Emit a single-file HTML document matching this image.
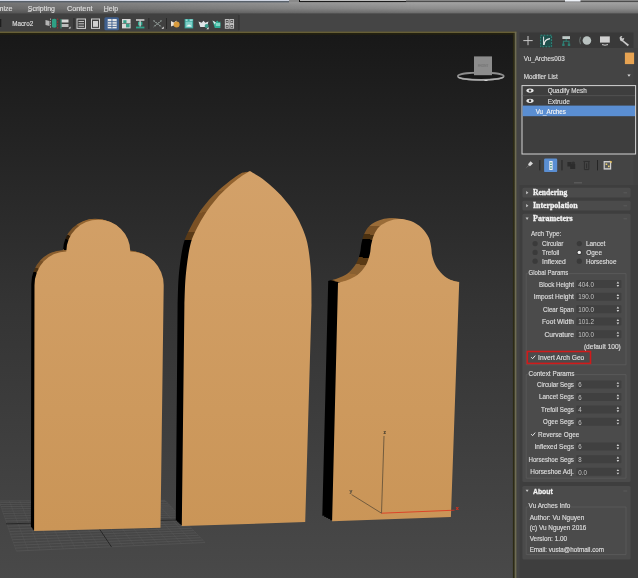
<!DOCTYPE html><html><head><meta charset="utf-8"><title>3ds Max - Vu_Arches</title>
<style>html,body{margin:0;padding:0;background:#444;overflow:hidden}svg{display:block}text{white-space:pre}</style></head><body>
<svg width="638" height="578" viewBox="0 0 638 578" style="will-change:transform;filter:grayscale(0)">
<defs>
<linearGradient id="vp" x1="0" y1="0" x2="0" y2="1"><stop offset="0" stop-color="#181818"/><stop offset="0.5" stop-color="#343434"/><stop offset="1" stop-color="#494949"/></linearGradient>
<linearGradient id="menu" x1="0" y1="0" x2="0" y2="1"><stop offset="0" stop-color="#787878"/><stop offset="0.5" stop-color="#6a6a6a"/><stop offset="0.85" stop-color="#545454"/><stop offset="1" stop-color="#464646"/></linearGradient>
<linearGradient id="menu2" x1="0" y1="0" x2="0" y2="1"><stop offset="0" stop-color="#a4a4a4"/><stop offset="0.5" stop-color="#8c8c8c"/><stop offset="0.85" stop-color="#6a6a6a"/><stop offset="1" stop-color="#464646"/></linearGradient>
<linearGradient id="mh" x1="0" y1="0" x2="1" y2="0"><stop offset="0" stop-color="#fff" stop-opacity="0"/><stop offset="0.65" stop-color="#fff" stop-opacity="1"/><stop offset="1" stop-color="#fff" stop-opacity="1"/></linearGradient>
<mask id="mm" maskUnits="userSpaceOnUse" x="0" y="0" width="638" height="20"><rect x="0" y="0" width="638" height="20" fill="url(#mh)"/></mask>
<linearGradient id="face" gradientUnits="userSpaceOnUse" x1="0" y1="170" x2="0" y2="530"><stop offset="0" stop-color="#d3a169"/><stop offset="1" stop-color="#ca9557"/></linearGradient>
</defs>
<rect x="0.00" y="0.00" width="638.00" height="578.00" fill="#444444"/>
<rect x="0.00" y="2.00" width="638.00" height="13.20" fill="url(#menu)"/>
<rect x="0.00" y="2.00" width="638.00" height="13.20" fill="url(#menu2)" mask="url(#mm)"/>
<rect x="0.00" y="0.00" width="289.00" height="1.20" fill="#cfd5e2"/>
<rect x="0.00" y="1.20" width="289.00" height="1.20" fill="#56606c"/>
<rect x="289.00" y="0.00" width="10.00" height="2.00" fill="#8a8a8a"/>
<rect x="299.00" y="0.00" width="1.20" height="2.00" fill="#111"/>
<rect x="300.00" y="0.00" width="106.00" height="1.00" fill="#bcbcbc"/>
<rect x="300.00" y="1.00" width="106.00" height="1.10" fill="#1c1c1c"/>
<rect x="406.00" y="0.00" width="232.00" height="1.00" fill="#858585"/>
<rect x="406.00" y="1.00" width="232.00" height="1.10" fill="#4c4c4c"/>
<rect x="565.00" y="0.00" width="15.50" height="1.60" fill="#eef2f8"/>
<rect x="0.00" y="13.50" width="239.00" height="18.00" fill="#404040"/>
<rect x="239.00" y="13.50" width="399.00" height="18.00" fill="#454545"/>
<rect x="0.00" y="19.00" width="1.30" height="8.00" fill="#1e1e1e"/>
<text x="12.6" y="10.78" font-family='"Liberation Sans", sans-serif' font-size="7.2" font-weight="normal" fill="#dcdcdc" text-anchor="end" stroke="#dcdcdc" stroke-width="0.18">mize</text>
<text x="27.8" y="10.78" font-family='"Liberation Sans", sans-serif' font-size="7.2" font-weight="normal" fill="#dcdcdc" text-anchor="start" textLength="27.2" lengthAdjust="spacingAndGlyphs" stroke="#dcdcdc" stroke-width="0.18">Scripting</text>
<rect x="27.80" y="11.30" width="3.60" height="0.70" fill="#dcdcdc"/>
<text x="66.9" y="10.78" font-family='"Liberation Sans", sans-serif' font-size="7.2" font-weight="normal" fill="#dcdcdc" text-anchor="start" textLength="25.6" lengthAdjust="spacingAndGlyphs" stroke="#dcdcdc" stroke-width="0.18">Content</text>
<text x="103.8" y="10.78" font-family='"Liberation Sans", sans-serif' font-size="7.2" font-weight="normal" fill="#dcdcdc" text-anchor="start" textLength="14.3" lengthAdjust="spacingAndGlyphs" stroke="#dcdcdc" stroke-width="0.18">Help</text>
<rect x="103.80" y="11.30" width="4.00" height="0.70" fill="#dcdcdc"/>
<text x="12.2" y="26.01" font-family='"Liberation Sans", sans-serif' font-size="7" font-weight="normal" fill="#dcdcdc" text-anchor="start" textLength="21.0" lengthAdjust="spacingAndGlyphs" stroke="#dcdcdc" stroke-width="0.18">Macro2</text>
<path d="M45.5,20 l4,1 v5 l-4,-1z" fill="#b4b4b4"/>
<path d="M50.5,18.5 v10" stroke="#cfcfcf" stroke-width="0.7" stroke-dasharray="1.4 1.2"/>
<path d="M52,19.5 q2.4,-1.6 4.4,0 v7.5 q-2,1.6 -4.4,0z" fill="#2f9f84"/>
<path d="M57.7,18.5 v10.5" stroke="#b03030" stroke-width="0.8" stroke-dasharray="1.6 1.2"/>
<rect x="61.50" y="19.50" width="7.00" height="3.00" fill="#d8d8d8"/>
<rect x="61.50" y="24.00" width="7.00" height="3.00" fill="#bdbdbd"/>
<path d="M68.5,28.5 h2 v-2z" fill="#eee"/>
<rect x="60.60" y="19.00" width="0.80" height="9.50" fill="#35a88a"/>
<rect x="73.50" y="18.00" width="0.90" height="11.00" fill="#262626"/>
<rect x="77.00" y="19.00" width="8.50" height="9.40" fill="none" stroke="#d0d0d0" stroke-width="1"/>
<rect x="78.50" y="21.00" width="5.50" height="0.90" fill="#d0d0d0"/>
<rect x="78.50" y="23.40" width="5.50" height="0.90" fill="#d0d0d0"/>
<rect x="78.50" y="25.80" width="5.50" height="0.90" fill="#d0d0d0"/>
<rect x="91.50" y="19.00" width="8.00" height="9.40" fill="none" stroke="#d0d0d0" stroke-width="1"/>
<rect x="93.00" y="21.00" width="5.00" height="0.90" fill="#d0d0d0"/>
<rect x="93.00" y="23.40" width="5.00" height="0.90" fill="#d0d0d0"/>
<rect x="93.00" y="25.80" width="5.00" height="0.90" fill="#d0d0d0"/>
<rect x="93.00" y="21.00" width="5.00" height="5.50" fill="#cfcfcf"/>
<rect x="104.40" y="17.20" width="14.60" height="13.00" fill="#3f5f8e" rx="1.5"/>
<rect x="107.70" y="19.00" width="9.00" height="9.40" fill="#e8e8e8"/>
<rect x="107.70" y="21.30" width="9.00" height="0.80" fill="#3f5f8e"/>
<rect x="107.70" y="23.70" width="9.00" height="0.80" fill="#3f5f8e"/>
<rect x="107.70" y="26.10" width="9.00" height="0.80" fill="#3f5f8e"/>
<rect x="111.50" y="19.00" width="0.90" height="9.40" fill="#3f5f8e"/>
<rect x="122.00" y="19.00" width="8.60" height="9.40" fill="#d8d8d8"/>
<rect x="123.30" y="20.20" width="3.20" height="3.20" fill="#38a08a"/>
<rect x="126.00" y="23.80" width="3.60" height="3.60" fill="#38a08a"/>
<rect x="122.00" y="23.20" width="8.60" height="0.70" fill="#666"/>
<rect x="136.00" y="19.30" width="8.40" height="1.40" fill="#e0e0e0"/>
<rect x="136.00" y="26.60" width="8.40" height="1.80" fill="#2fa58c"/>
<rect x="138.00" y="21.80" width="4.40" height="3.60" fill="#2fa58c"/>
<rect x="139.50" y="20.50" width="1.20" height="6.00" fill="#ddd"/>
<rect x="148.40" y="18.00" width="0.90" height="11.00" fill="#262626"/>
<path d="M153.5,20.5 l8,6.5 M161.5,20.5 l-8,6.5" stroke="#9aa6a2" stroke-width="1.1" stroke-dasharray="1.6 0.9"/>
<path d="M161.5,28.8 h2.2 v-2.2z" fill="#eee"/>
<rect x="166.00" y="18.00" width="0.90" height="11.00" fill="#262626"/>
<path d="M171,21 l3,1.5 l2.5,-2 v6 l-3,-1 l-2.5,1z" fill="#e6e0d8"/>
<circle cx="176.6" cy="24.6" r="3" fill="#d79a3c"/>
<rect x="184.60" y="19.00" width="8.60" height="9.40" fill="#3aa39a"/>
<rect x="185.60" y="21.60" width="6.60" height="5.80" fill="#7fd0c8"/>
<rect x="185.60" y="19.60" width="2.00" height="1.00" fill="#dff"/>
<rect x="189.60" y="19.60" width="3.00" height="1.00" fill="#dff"/>
<path d="M186.5,26.5 q2.6,-4 5,0z" fill="#e8f4f2"/>
<path d="M198.5,21.5 l3.2,1.2 l1.8,-2 l1.8,2 l3.2,-1.2 l-1.8,5.4 h-6.4z" fill="#dfe4e6"/>
<circle cx="206.6" cy="26" r="2" fill="#3a9c8c"/>
<path d="M206.4,29.2 h2.2 v-2.2z" fill="#eee"/>
<path d="M212.6,20.8 l3,1.4 l1.6,-1.8 l1.6,1.8 l1.6,-0.8 v6.6 h-5.6z" fill="#2fae96"/>
<path d="M212.4,20.4 l3.4,1.8 l-1,2.4z" fill="#e8e8e8"/>
<rect x="215.80" y="23.00" width="4.40" height="3.00" fill="#7fd6c4"/>
<rect x="225.30" y="19.60" width="3.60" height="3.80" fill="none" stroke="#cfcfcf" stroke-width="0.9"/>
<rect x="226.40" y="20.90" width="1.40" height="1.40" fill="#cfcfcf"/>
<rect x="230.00" y="19.60" width="3.60" height="3.80" fill="none" stroke="#cfcfcf" stroke-width="0.9"/>
<rect x="231.10" y="20.90" width="1.40" height="1.40" fill="#cfcfcf"/>
<rect x="225.30" y="24.40" width="3.60" height="3.80" fill="none" stroke="#cfcfcf" stroke-width="0.9"/>
<rect x="226.40" y="25.70" width="1.40" height="1.40" fill="#cfcfcf"/>
<rect x="230.00" y="24.40" width="3.60" height="3.80" fill="none" stroke="#cfcfcf" stroke-width="0.9"/>
<rect x="231.10" y="25.70" width="1.40" height="1.40" fill="#cfcfcf"/>
<rect x="238.60" y="15.00" width="0.80" height="15.50" fill="#2e2e2e"/>
<rect x="0.00" y="32.00" width="516.00" height="546.00" fill="url(#vp)"/>
<rect x="0.00" y="31.60" width="516.40" height="1.50" fill="#675f36"/>
<rect x="0.00" y="33.10" width="514.70" height="1.60" fill="#242210"/>
<rect x="512.90" y="33.10" width="1.80" height="545.00" fill="#2c2a14"/>
<rect x="514.70" y="31.80" width="1.70" height="546.40" fill="#6e6c52"/>
<path d="M-1.0,501.0L16.4,551.0M9.4,501.0L28.2,550.5M19.8,500.9L40.0,549.9M30.1,500.9L51.8,549.4M40.5,500.8L63.5,548.9M50.9,500.8L75.3,548.3M61.2,500.7L87.1,547.8M71.6,500.7L98.9,547.3M82.0,500.6L110.7,546.8M92.4,500.6L122.5,546.2M102.8,500.6L134.3,545.7M113.1,500.5L146.1,545.2M123.5,500.5L157.8,544.6M133.9,500.4L169.6,544.1M144.2,500.4L181.4,543.6M154.6,500.3L193.2,543.0M165.0,500.3L205.0,542.5" stroke="#585858" stroke-width="0.5" fill="none" opacity="0.7"/>
<path d="M-1.0,501.0L165.0,500.3M-0.4,502.6L166.3,501.6M0.2,504.5L167.8,503.3M1.0,506.6L169.5,505.1M1.7,508.9L171.3,506.9M2.5,511.2L173.1,508.9M3.4,513.5L175.0,510.9M4.2,516.0L177.0,512.9M5.1,518.4L178.9,515.0M5.9,521.0L181.0,517.1M6.8,523.5L183.0,519.3M7.7,526.1L185.1,521.5M8.7,528.8L187.2,523.8M9.6,531.5L189.4,526.0M10.5,534.2L191.5,528.3M11.5,536.9L193.7,530.6M12.5,539.7L195.9,532.9M13.4,542.5L198.2,535.3M14.4,545.3L200.4,537.7M15.4,548.1L202.7,540.1M16.4,551.0L205.0,542.5" stroke="#5c5c5c" stroke-width="0.6" fill="none" opacity="0.85"/>
<path d="M6,523.8 L190,519.6 M80.5,500.5 L111.5,547" stroke="#1e1e1e" stroke-width="0.8" fill="none"/>
<defs><linearGradient id="s1" gradientUnits="userSpaceOnUse" x1="0" y1="215" x2="0" y2="300"><stop offset="0.0000" stop-color="#93642f"/><stop offset="0.1294" stop-color="#93642f"/><stop offset="0.1294" stop-color="#7a5226"/><stop offset="0.2471" stop-color="#7a5226"/><stop offset="0.2471" stop-color="#2a1a08"/><stop offset="0.2941" stop-color="#2a1a08"/><stop offset="0.2941" stop-color="#000"/><stop offset="0.4176" stop-color="#000"/><stop offset="0.4176" stop-color="#8a5e2e"/><stop offset="0.5529" stop-color="#8a5e2e"/><stop offset="0.5529" stop-color="#7a5226"/><stop offset="0.6353" stop-color="#7a5226"/><stop offset="0.6353" stop-color="#4a3012"/><stop offset="0.6824" stop-color="#4a3012"/><stop offset="0.6824" stop-color="#000"/><stop offset="1.0000" stop-color="#000"/></linearGradient></defs>
<defs><path id="arch1" d="M34.1,531 L34.5,285.2 A31.9,33.8 0 0 1 66.3,251.4 A32,31.7 0 0 1 130.3,251.4 A33.4,33.8 0 0 1 163.7,285.2 L160.5,527.8 Z"/></defs>
<use href="#arch1" fill="url(#s1)" transform="matrix(1 0 0.00000 0.98996 -3.200 1.330)"/>
<use href="#arch1" fill="url(#s1)" transform="matrix(1 0 0.00000 0.99197 -2.560 1.064)"/>
<use href="#arch1" fill="url(#s1)" transform="matrix(1 0 0.00000 0.99398 -1.920 0.798)"/>
<use href="#arch1" fill="url(#s1)" transform="matrix(1 0 0.00000 0.99598 -1.280 0.532)"/>
<use href="#arch1" fill="url(#s1)" transform="matrix(1 0 0.00000 0.99799 -0.640 0.266)"/>
<use href="#arch1" fill="url(#face)"/>
<defs><linearGradient id="s2" gradientUnits="userSpaceOnUse" x1="0" y1="170" x2="0" y2="250"><stop offset="0.0000" stop-color="#93632f"/><stop offset="0.2500" stop-color="#93632f"/><stop offset="0.2500" stop-color="#855a2a"/><stop offset="0.5250" stop-color="#855a2a"/><stop offset="0.5250" stop-color="#7a5024"/><stop offset="0.7750" stop-color="#7a5024"/><stop offset="0.7750" stop-color="#5a3a16"/><stop offset="0.8750" stop-color="#5a3a16"/><stop offset="0.8750" stop-color="#000"/><stop offset="1.0000" stop-color="#000"/></linearGradient></defs>
<defs><path id="arch2" d="M181.8,526.1 L184.4,305 C184.6,301.1 184.8,288.5 185.3,281.3 C185.8,274.1 186.4,268.4 187.3,261.9 C188.2,255.4 189.3,248.2 190.9,242.5 C192.5,236.8 194.6,232.8 197.0,228.0 C199.4,223.2 202.2,218.2 205.4,213.4 C208.6,208.6 212.5,203.3 216.3,198.9 C220.1,194.5 224.4,190.4 228.4,186.8 C232.4,183.2 236.9,179.7 240.5,177.1 C244.1,174.5 248.2,172.1 249.8,171.1 C251.5,172.1 256.2,174.5 259.9,177.1 C263.6,179.7 268.0,183.2 272.0,186.8 C276.0,190.4 280.3,194.5 284.1,198.9 C287.9,203.3 292.0,208.6 295.0,213.4 C298.0,218.2 300.3,223.2 302.3,228.0 C304.3,232.8 305.9,236.8 307.2,242.5 C308.5,248.2 309.4,255.4 310.1,261.9 C310.8,268.4 311.1,274.1 311.3,281.3 C311.5,288.5 311.5,301.1 311.5,305.0 L305.2,522.1 Z"/></defs>
<use href="#arch2" fill="url(#s2)" transform="matrix(1 0 0.00366 0.98030 -7.930 4.870)"/>
<use href="#arch2" fill="url(#s2)" transform="matrix(1 0 0.00293 0.98424 -6.344 3.896)"/>
<use href="#arch2" fill="url(#s2)" transform="matrix(1 0 0.00220 0.98818 -4.758 2.922)"/>
<use href="#arch2" fill="url(#s2)" transform="matrix(1 0 0.00146 0.99212 -3.172 1.948)"/>
<use href="#arch2" fill="url(#s2)" transform="matrix(1 0 0.00073 0.99606 -1.586 0.974)"/>
<use href="#arch2" fill="url(#face)"/>
<defs><linearGradient id="s3" gradientUnits="userSpaceOnUse" x1="0" y1="215" x2="0" y2="300"><stop offset="0.0000" stop-color="#9a6c38"/><stop offset="0.1365" stop-color="#9a6c38"/><stop offset="0.1365" stop-color="#7a5226"/><stop offset="0.2353" stop-color="#7a5226"/><stop offset="0.2353" stop-color="#4a3010"/><stop offset="0.2918" stop-color="#4a3010"/><stop offset="0.2918" stop-color="#000"/><stop offset="0.5106" stop-color="#000"/><stop offset="0.5106" stop-color="#5a3a14"/><stop offset="0.5929" stop-color="#5a3a14"/><stop offset="0.5929" stop-color="#8a6030"/><stop offset="0.7059" stop-color="#8a6030"/><stop offset="0.7059" stop-color="#9a6a34"/><stop offset="0.7906" stop-color="#9a6a34"/><stop offset="0.7906" stop-color="#000"/><stop offset="1.0000" stop-color="#000"/></linearGradient></defs>
<defs><path id="arch3" d="M332.1,521.3 L338,282.7 C339.6,282.2 344.5,281.2 347.7,279.9 C350.9,278.6 354.4,277.4 357.4,275.0 C360.4,272.6 363.6,268.8 365.7,265.4 C367.8,261.9 368.9,257.8 369.8,254.3 C370.7,250.8 370.5,247.8 371.2,244.6 C371.9,241.4 372.6,237.9 374.0,234.9 C375.4,231.9 377.0,228.9 379.5,226.6 C382.0,224.3 385.9,222.4 389.2,221.1 C392.4,219.8 395.4,219.0 399.0,219.0 C402.6,219.0 407.0,219.6 410.8,221.1 C414.6,222.6 418.8,225.2 421.8,228.0 C424.8,230.8 427.2,234.5 428.8,237.7 C430.4,240.9 430.6,244.4 431.2,247.4 C431.8,250.4 431.4,252.7 432.2,255.7 C432.9,258.7 434.0,262.3 435.7,265.4 C437.4,268.5 440.1,272.0 442.6,274.4 C445.1,276.8 448.1,278.6 450.9,279.9 C453.7,281.2 457.8,281.6 459.2,282.0 L450.9,517 Z"/></defs>
<use href="#arch3" fill="url(#s3)" transform="matrix(1 0 0.00000 0.98410 -9.800 2.780)"/>
<use href="#arch3" fill="url(#s3)" transform="matrix(1 0 0.00000 0.98728 -7.840 2.224)"/>
<use href="#arch3" fill="url(#s3)" transform="matrix(1 0 0.00000 0.99046 -5.880 1.668)"/>
<use href="#arch3" fill="url(#s3)" transform="matrix(1 0 0.00000 0.99364 -3.920 1.112)"/>
<use href="#arch3" fill="url(#s3)" transform="matrix(1 0 0.00000 0.99682 -1.960 0.556)"/>
<use href="#arch3" fill="url(#face)"/>
<path d="M381.5,513.2 L384,436" stroke="#4c4232" stroke-width="0.7" fill="none"/>
<path d="M381.5,513.2 L351.6,494.6" stroke="#4c4232" stroke-width="0.7" fill="none"/>
<path d="M381.5,513.2 L454.5,510.2" stroke="#e0301c" stroke-width="0.8" fill="none"/>
<text x="383.4" y="434.39" font-family='"Liberation Sans", sans-serif' font-size="5" font-weight="bold" fill="#4a4030" text-anchor="start" stroke="#4a4030" stroke-width="0.18">z</text>
<text x="349.4" y="493.39" font-family='"Liberation Sans", sans-serif' font-size="5" font-weight="bold" fill="#5a5040" text-anchor="start" stroke="#5a5040" stroke-width="0.18">y</text>
<text x="455.8" y="509.97" font-family='"Liberation Sans", sans-serif' font-size="5.5" font-weight="bold" fill="#d83020" text-anchor="start" stroke="#d83020" stroke-width="0.18">x</text>
<ellipse cx="480.8" cy="76.2" rx="23" ry="3.6" fill="#161616" stroke="#8e8e8e" stroke-width="1.6"/>
<path d="M458.2,77 A23,3.6 0 0 0 503.4,77" fill="none" stroke="#b0b0b0" stroke-width="1.5"/>
<rect x="474.00" y="56.40" width="18.00" height="18.80" fill="#8c8c8c"/>
<text x="483.0" y="67.29" font-family='"Liberation Sans", sans-serif' font-size="3.6" font-weight="normal" fill="#777" text-anchor="middle" textLength="10.5" lengthAdjust="spacingAndGlyphs" stroke="#777" stroke-width="0.18">FRONT</text>
<rect x="484.50" y="80.00" width="3.00" height="0.90" fill="#ddd"/>
<rect x="519.50" y="32.50" width="114.00" height="15.50" fill="#393939"/>
<rect x="519.50" y="185.00" width="118.50" height="393.00" fill="#3e3e3e"/>
<rect x="633.60" y="48.00" width="4.40" height="137.00" fill="#414141"/>
<path d="M523.3,40.6 h9.4 M528,36 v9.2" stroke="#cfcfcf" stroke-width="0.95" fill="none"/>
<rect x="540.60" y="35.20" width="11.00" height="11.60" fill="#1f4f4b" stroke="#2f8a7e" stroke-width="1" stroke-dasharray="1.8 1.2"/>
<path d="M544,45 q0.2,-5.6 6,-6.4" stroke="#e8e8e8" stroke-width="1.3" fill="none"/>
<path d="M543.6,36.6 v8.4" stroke="#e8e8e8" stroke-width="1" fill="none"/>
<rect x="562.40" y="36.20" width="7.60" height="2.80" fill="#bfcac8"/>
<path d="M566.2,39 v2 M563.4,45.8 v-4.6 h5.6 v4.6" stroke="#2f7f74" stroke-width="1.1" fill="none"/>
<rect x="562.20" y="43.60" width="2.40" height="2.40" fill="#2f7f74"/>
<rect x="567.80" y="43.60" width="2.40" height="2.40" fill="#2f7f74"/>
<circle cx="586.9" cy="40.5" r="4.3" fill="#b9c2c0"/>
<path d="M580.5,36.8 q-1.8,3.8 0,7.4" stroke="#6e7876" stroke-width="0.9" fill="none"/>
<rect x="600.00" y="36.40" width="9.80" height="6.20" fill="#d0d0d0"/>
<path d="M602,44.6 q3,1.2 6,0" stroke="#cfcfcf" stroke-width="1" fill="none"/>
<path d="M619.6,37.6 q0.6,-2 2.8,-1.6 l-1,1.6 l1.2,1 l1.6,-0.8 q0.2,1.6 -1,2.4 l5.8,4.6 l-1.2,1.4 l-5.8,-5 q-2.2,0.4 -2.4,-3.6z" fill="#c8c8c8"/>
<text x="523.7" y="61.01" font-family='"Liberation Sans", sans-serif' font-size="7" font-weight="normal" fill="#dcdcdc" text-anchor="start" textLength="41.1" lengthAdjust="spacingAndGlyphs" stroke="#dcdcdc" stroke-width="0.18">Vu_Arches003</text>
<rect x="624.90" y="52.60" width="9.20" height="11.50" fill="#e7a352"/>
<text x="523.7" y="78.51" font-family='"Liberation Sans", sans-serif' font-size="7" font-weight="normal" fill="#dcdcdc" text-anchor="start" textLength="34.1" lengthAdjust="spacingAndGlyphs" stroke="#dcdcdc" stroke-width="0.18">Modifier List</text>
<path d="M627.4,74.6 h3.2 l-1.6,2.2z" fill="#dedede"/>
<rect x="522.00" y="85.60" width="113.60" height="68.40" fill="#3e3e3e" stroke="#d4d4d4" stroke-width="1"/>
<rect x="522.60" y="95.40" width="112.40" height="0.70" fill="#5a5a5a"/>
<rect x="522.60" y="105.60" width="112.40" height="10.60" fill="#5a8ed2"/>
<ellipse cx="530" cy="90.6" rx="3.6" ry="2.1" fill="#e6e6e6"/><circle cx="530" cy="90.6" r="1.2" fill="#333"/>
<ellipse cx="530" cy="100.8" rx="3.6" ry="2.1" fill="#e6e6e6"/><circle cx="530" cy="100.8" r="1.2" fill="#333"/>
<text x="547.7" y="93.31" font-family='"Liberation Sans", sans-serif' font-size="7" font-weight="normal" fill="#dcdcdc" text-anchor="start" textLength="39.0" lengthAdjust="spacingAndGlyphs" stroke="#dcdcdc" stroke-width="0.18">Quadify Mesh</text>
<text x="547.7" y="103.51" font-family='"Liberation Sans", sans-serif' font-size="7" font-weight="normal" fill="#dcdcdc" text-anchor="start" textLength="22.1" lengthAdjust="spacingAndGlyphs" stroke="#dcdcdc" stroke-width="0.18">Extrude</text>
<text x="535.7" y="113.51" font-family='"Liberation Sans", sans-serif' font-size="7" font-weight="normal" fill="#f4f4f4" text-anchor="start" textLength="30.1" lengthAdjust="spacingAndGlyphs" stroke="#f4f4f4" stroke-width="0.18">Vu_Arches</text>
<path d="M525.4,168.8 l3.4,-3.6 l-0.8,-1 l2.6,-3 l2.4,2.4 l-3,2.6 l-1,-0.8z" fill="#d8d8d8"/>
<rect x="539.40" y="160.00" width="0.90" height="10.40" fill="#222"/>
<rect x="544.10" y="158.50" width="13.10" height="13.60" fill="#5a8ed2" rx="1.2"/>
<rect x="549.30" y="161.00" width="3.30" height="9.00" fill="#f0f0f0"/>
<rect x="550.20" y="162.50" width="1.50" height="1.20" fill="#2a8a7a"/>
<rect x="550.20" y="165.00" width="1.50" height="1.20" fill="#2a8a7a"/>
<rect x="550.20" y="167.50" width="1.50" height="1.20" fill="#2a8a7a"/>
<rect x="561.50" y="160.00" width="0.90" height="10.40" fill="#222"/>
<path d="M567.4,162 h4.2 v2 h3.6 v5 h-5 v-2.4 h-2.8z" fill="#2c2c2c"/><circle cx="573.4" cy="163" r="1.6" fill="#303030"/>
<path d="M583.4,161.4 h6.4 M584.4,162 v7.6 h4.4 v-7.6 M586.6,163.4 v5" stroke="#2e2e2e" stroke-width="1" fill="none"/>
<rect x="597.00" y="160.00" width="0.90" height="10.40" fill="#222"/>
<rect x="603.60" y="161.00" width="7.60" height="8.60" fill="#cfcfcf"/>
<rect x="604.80" y="162.40" width="5.20" height="5.80" fill="#5a5a5a"/>
<rect x="605.60" y="163.40" width="1.60" height="1.60" fill="#e8d070"/>
<rect x="608.00" y="165.60" width="1.60" height="1.60" fill="#e8d070"/>
<path d="M609.6,160.4 l2.6,1.4 l-1.2,1.6z" fill="#e8c050"/>
<rect x="574.00" y="182.40" width="8.00" height="0.90" fill="#666" stroke-dasharray="1 1"/>
<rect x="522.40" y="187.80" width="108.20" height="9.80" fill="#4b4b4b" rx="1.5"/>
<path d="M526.2,191.10000000000002 v3.2 l2.2,-1.6z" fill="#c8c8c8"/>
<text x="533.0" y="195.35" font-family='"Liberation Serif", serif' font-size="8.6" font-weight="bold" fill="#f2f2f2" text-anchor="start" textLength="34.2" lengthAdjust="spacingAndGlyphs" stroke="#f2f2f2" stroke-width="0.3">Rendering</text>
<rect x="623.50" y="192.40" width="3.60" height="0.80" fill="#5e5e5e"/>
<rect x="522.40" y="200.80" width="108.20" height="9.80" fill="#4b4b4b" rx="1.5"/>
<path d="M526.2,204.10000000000002 v3.2 l2.2,-1.6z" fill="#c8c8c8"/>
<text x="533.0" y="208.35" font-family='"Liberation Serif", serif' font-size="8.6" font-weight="bold" fill="#f2f2f2" text-anchor="start" textLength="44.5" lengthAdjust="spacingAndGlyphs" stroke="#f2f2f2" stroke-width="0.3">Interpolation</text>
<rect x="623.50" y="205.40" width="3.60" height="0.80" fill="#5e5e5e"/>
<rect x="522.40" y="213.80" width="108.20" height="268.20" fill="#4b4b4b" rx="1.5"/>
<path d="M525.6,217.50000000000003 h3 l-1.5,2.4z" fill="#c8c8c8"/>
<text x="533.0" y="221.35" font-family='"Liberation Serif", serif' font-size="8.6" font-weight="bold" fill="#f2f2f2" text-anchor="start" textLength="39.7" lengthAdjust="spacingAndGlyphs" stroke="#f2f2f2" stroke-width="0.3">Parameters</text>
<rect x="623.50" y="218.40" width="3.60" height="0.80" fill="#5e5e5e"/>
<rect x="522.40" y="486.00" width="108.20" height="73.50" fill="#4b4b4b" rx="1.5"/>
<path d="M525.6,489.7 h3 l-1.5,2.4z" fill="#c8c8c8"/>
<text x="533.0" y="493.55" font-family='"Liberation Sans", sans-serif' font-size="7.6" font-weight="bold" fill="#f2f2f2" text-anchor="start" textLength="19.7" lengthAdjust="spacingAndGlyphs" stroke="#f2f2f2" stroke-width="0.3">About</text>
<rect x="623.50" y="490.60" width="3.60" height="0.80" fill="#5e5e5e"/>
<text x="531.1" y="236.11" font-family='"Liberation Sans", sans-serif' font-size="7" font-weight="normal" fill="#dcdcdc" text-anchor="start" textLength="30.1" lengthAdjust="spacingAndGlyphs" stroke="#dcdcdc" stroke-width="0.18">Arch Type:</text>
<circle cx="535.1" cy="243.6" r="2.6" fill="#3a3a3a"/>
<text x="542.1" y="246.21" font-family='"Liberation Sans", sans-serif' font-size="7" font-weight="normal" fill="#dcdcdc" text-anchor="start" textLength="21.1" lengthAdjust="spacingAndGlyphs" stroke="#dcdcdc" stroke-width="0.18">Circular</text>
<circle cx="579.3" cy="243.6" r="2.6" fill="#3a3a3a"/>
<text x="585.9" y="246.21" font-family='"Liberation Sans", sans-serif' font-size="7" font-weight="normal" fill="#dcdcdc" text-anchor="start" textLength="19.5" lengthAdjust="spacingAndGlyphs" stroke="#dcdcdc" stroke-width="0.18">Lancet</text>
<circle cx="535.1" cy="252.4" r="2.6" fill="#3a3a3a"/>
<text x="542.1" y="255.01" font-family='"Liberation Sans", sans-serif' font-size="7" font-weight="normal" fill="#dcdcdc" text-anchor="start" textLength="17.1" lengthAdjust="spacingAndGlyphs" stroke="#dcdcdc" stroke-width="0.18">Trefoil</text>
<circle cx="579.3" cy="252.4" r="2.6" fill="#3a3a3a"/>
<circle cx="579.3" cy="252.4" r="1.7" fill="#f2f2f2"/>
<text x="586.3" y="255.01" font-family='"Liberation Sans", sans-serif' font-size="7" font-weight="normal" fill="#dcdcdc" text-anchor="start" textLength="15.7" lengthAdjust="spacingAndGlyphs" stroke="#dcdcdc" stroke-width="0.18">Ogee</text>
<circle cx="535.1" cy="261.2" r="2.6" fill="#3a3a3a"/>
<text x="542.1" y="263.81" font-family='"Liberation Sans", sans-serif' font-size="7" font-weight="normal" fill="#dcdcdc" text-anchor="start" textLength="23.7" lengthAdjust="spacingAndGlyphs" stroke="#dcdcdc" stroke-width="0.18">Inflexed</text>
<circle cx="579.3" cy="261.2" r="2.6" fill="#3a3a3a"/>
<text x="585.9" y="263.81" font-family='"Liberation Sans", sans-serif' font-size="7" font-weight="normal" fill="#dcdcdc" text-anchor="start" textLength="30.5" lengthAdjust="spacingAndGlyphs" stroke="#dcdcdc" stroke-width="0.18">Horseshoe</text>
<path d="M568.9000000000001,273.6 H626 V364.8 H526.2 V273.6 H527.8000000000001" stroke="#5c5c5c" stroke-width="0.8" fill="none"/>
<text x="528.6" y="274.91" font-family='"Liberation Sans", sans-serif' font-size="7" font-weight="normal" fill="#dcdcdc" text-anchor="start" textLength="39.7" lengthAdjust="spacingAndGlyphs" stroke="#dcdcdc" stroke-width="0.18">Global Params</text>
<text x="573.9" y="286.61" font-family='"Liberation Sans", sans-serif' font-size="7" font-weight="normal" fill="#dcdcdc" text-anchor="end" textLength="34.8" lengthAdjust="spacingAndGlyphs" stroke="#dcdcdc" stroke-width="0.18">Block Height</text>
<rect x="576.30" y="280.10" width="45.10" height="8.00" fill="#404040" rx="0.8"/>
<text x="578.3" y="286.81" font-family='"Liberation Sans", sans-serif' font-size="7" font-weight="normal" fill="#c4c4c4" text-anchor="start" textLength="15.7" lengthAdjust="spacingAndGlyphs">404.0</text>
<path d="M616.6,283.40000000000003 h2.6 l-1.3,-1.9z M616.6,285.0 h2.6 l-1.3,1.9z" fill="#d8d8d8"/>
<text x="573.9" y="299.21" font-family='"Liberation Sans", sans-serif' font-size="7" font-weight="normal" fill="#dcdcdc" text-anchor="end" textLength="40.2" lengthAdjust="spacingAndGlyphs" stroke="#dcdcdc" stroke-width="0.18">Impost Height</text>
<rect x="576.30" y="292.70" width="45.10" height="8.00" fill="#404040" rx="0.8"/>
<text x="578.3" y="299.41" font-family='"Liberation Sans", sans-serif' font-size="7" font-weight="normal" fill="#c4c4c4" text-anchor="start" textLength="15.7" lengthAdjust="spacingAndGlyphs">190.0</text>
<path d="M616.6,296.0 h2.6 l-1.3,-1.9z M616.6,297.59999999999997 h2.6 l-1.3,1.9z" fill="#d8d8d8"/>
<text x="573.9" y="311.71" font-family='"Liberation Sans", sans-serif' font-size="7" font-weight="normal" fill="#dcdcdc" text-anchor="end" textLength="30.8" lengthAdjust="spacingAndGlyphs" stroke="#dcdcdc" stroke-width="0.18">Clear Span</text>
<rect x="576.30" y="305.20" width="45.10" height="8.00" fill="#404040" rx="0.8"/>
<text x="578.3" y="311.91" font-family='"Liberation Sans", sans-serif' font-size="7" font-weight="normal" fill="#c4c4c4" text-anchor="start" textLength="15.7" lengthAdjust="spacingAndGlyphs">100.0</text>
<path d="M616.6,308.5 h2.6 l-1.3,-1.9z M616.6,310.09999999999997 h2.6 l-1.3,1.9z" fill="#d8d8d8"/>
<text x="573.9" y="324.11" font-family='"Liberation Sans", sans-serif' font-size="7" font-weight="normal" fill="#dcdcdc" text-anchor="end" textLength="31.8" lengthAdjust="spacingAndGlyphs" stroke="#dcdcdc" stroke-width="0.18">Foot Width</text>
<rect x="576.30" y="317.60" width="45.10" height="8.00" fill="#404040" rx="0.8"/>
<text x="578.3" y="324.31" font-family='"Liberation Sans", sans-serif' font-size="7" font-weight="normal" fill="#c4c4c4" text-anchor="start" textLength="15.7" lengthAdjust="spacingAndGlyphs">101.2</text>
<path d="M616.6,320.90000000000003 h2.6 l-1.3,-1.9z M616.6,322.5 h2.6 l-1.3,1.9z" fill="#d8d8d8"/>
<text x="573.9" y="336.81" font-family='"Liberation Sans", sans-serif' font-size="7" font-weight="normal" fill="#dcdcdc" text-anchor="end" textLength="29.4" lengthAdjust="spacingAndGlyphs" stroke="#dcdcdc" stroke-width="0.18">Curvature</text>
<rect x="576.30" y="330.30" width="45.10" height="8.00" fill="#404040" rx="0.8"/>
<text x="578.3" y="337.01" font-family='"Liberation Sans", sans-serif' font-size="7" font-weight="normal" fill="#c4c4c4" text-anchor="start" textLength="15.7" lengthAdjust="spacingAndGlyphs">100.0</text>
<path d="M616.6,333.6 h2.6 l-1.3,-1.9z M616.6,335.2 h2.6 l-1.3,1.9z" fill="#d8d8d8"/>
<text x="620.8" y="349.01" font-family='"Liberation Sans", sans-serif' font-size="7" font-weight="normal" fill="#dcdcdc" text-anchor="end" textLength="36.9" lengthAdjust="spacingAndGlyphs" stroke="#dcdcdc" stroke-width="0.18">(default 100)</text>
<path d="M531.2,357.2 l1.4,1.5 l2.6,-3.1" stroke="#e8e8e8" stroke-width="1" fill="none"/>
<text x="538.1" y="360.11" font-family='"Liberation Sans", sans-serif' font-size="7" font-weight="normal" fill="#dcdcdc" text-anchor="start" textLength="46.2" lengthAdjust="spacingAndGlyphs" stroke="#dcdcdc" stroke-width="0.18">Invert Arch Geo</text>
<rect x="527.30" y="351.50" width="63.20" height="11.90" fill="none" stroke="#d01a1a" stroke-width="1.6"/>
<path d="M575.0,374.6 H626 V478.2 H526.2 V374.6 H527.8000000000001" stroke="#5c5c5c" stroke-width="0.8" fill="none"/>
<text x="528.6" y="375.91" font-family='"Liberation Sans", sans-serif' font-size="7" font-weight="normal" fill="#dcdcdc" text-anchor="start" textLength="45.8" lengthAdjust="spacingAndGlyphs" stroke="#dcdcdc" stroke-width="0.18">Context Params</text>
<text x="573.9" y="387.01" font-family='"Liberation Sans", sans-serif' font-size="7" font-weight="normal" fill="#dcdcdc" text-anchor="end" textLength="36.8" lengthAdjust="spacingAndGlyphs" stroke="#dcdcdc" stroke-width="0.18">Circular Segs</text>
<rect x="576.30" y="380.50" width="45.10" height="8.00" fill="#404040" rx="0.8"/>
<text x="578.3" y="387.21" font-family='"Liberation Sans", sans-serif' font-size="7" font-weight="normal" fill="#c4c4c4" text-anchor="start" textLength="3.4" lengthAdjust="spacingAndGlyphs">6</text>
<path d="M616.6,383.8 h2.6 l-1.3,-1.9z M616.6,385.4 h2.6 l-1.3,1.9z" fill="#d8d8d8"/>
<text x="573.9" y="399.41" font-family='"Liberation Sans", sans-serif' font-size="7" font-weight="normal" fill="#dcdcdc" text-anchor="end" textLength="34.8" lengthAdjust="spacingAndGlyphs" stroke="#dcdcdc" stroke-width="0.18">Lancet Segs</text>
<rect x="576.30" y="392.90" width="45.10" height="8.00" fill="#404040" rx="0.8"/>
<text x="578.3" y="399.61" font-family='"Liberation Sans", sans-serif' font-size="7" font-weight="normal" fill="#c4c4c4" text-anchor="start" textLength="3.4" lengthAdjust="spacingAndGlyphs">6</text>
<path d="M616.6,396.2 h2.6 l-1.3,-1.9z M616.6,397.79999999999995 h2.6 l-1.3,1.9z" fill="#d8d8d8"/>
<text x="573.9" y="411.91" font-family='"Liberation Sans", sans-serif' font-size="7" font-weight="normal" fill="#dcdcdc" text-anchor="end" textLength="32.8" lengthAdjust="spacingAndGlyphs" stroke="#dcdcdc" stroke-width="0.18">Trefoil Segs</text>
<rect x="576.30" y="405.40" width="45.10" height="8.00" fill="#404040" rx="0.8"/>
<text x="578.3" y="412.11" font-family='"Liberation Sans", sans-serif' font-size="7" font-weight="normal" fill="#c4c4c4" text-anchor="start" textLength="3.4" lengthAdjust="spacingAndGlyphs">4</text>
<path d="M616.6,408.7 h2.6 l-1.3,-1.9z M616.6,410.29999999999995 h2.6 l-1.3,1.9z" fill="#d8d8d8"/>
<text x="573.9" y="424.31" font-family='"Liberation Sans", sans-serif' font-size="7" font-weight="normal" fill="#dcdcdc" text-anchor="end" textLength="30.8" lengthAdjust="spacingAndGlyphs" stroke="#dcdcdc" stroke-width="0.18">Ogee Segs</text>
<rect x="576.30" y="417.80" width="45.10" height="8.00" fill="#404040" rx="0.8"/>
<text x="578.3" y="424.51" font-family='"Liberation Sans", sans-serif' font-size="7" font-weight="normal" fill="#c4c4c4" text-anchor="start" textLength="3.4" lengthAdjust="spacingAndGlyphs">6</text>
<path d="M616.6,421.1 h2.6 l-1.3,-1.9z M616.6,422.7 h2.6 l-1.3,1.9z" fill="#d8d8d8"/>
<path d="M531.2,434.2 l1.4,1.5 l2.6,-3.1" stroke="#e8e8e8" stroke-width="1" fill="none"/>
<text x="538.1" y="437.11" font-family='"Liberation Sans", sans-serif' font-size="7" font-weight="normal" fill="#dcdcdc" text-anchor="start" textLength="41.2" lengthAdjust="spacingAndGlyphs" stroke="#dcdcdc" stroke-width="0.18">Reverse Ogee</text>
<text x="573.9" y="449.11" font-family='"Liberation Sans", sans-serif' font-size="7" font-weight="normal" fill="#dcdcdc" text-anchor="end" textLength="39.4" lengthAdjust="spacingAndGlyphs" stroke="#dcdcdc" stroke-width="0.18">Inflexed Segs</text>
<rect x="576.30" y="442.60" width="45.10" height="8.00" fill="#404040" rx="0.8"/>
<text x="578.3" y="449.31" font-family='"Liberation Sans", sans-serif' font-size="7" font-weight="normal" fill="#c4c4c4" text-anchor="start" textLength="3.4" lengthAdjust="spacingAndGlyphs">6</text>
<path d="M616.6,445.90000000000003 h2.6 l-1.3,-1.9z M616.6,447.5 h2.6 l-1.3,1.9z" fill="#d8d8d8"/>
<text x="573.9" y="461.71" font-family='"Liberation Sans", sans-serif' font-size="7" font-weight="normal" fill="#dcdcdc" text-anchor="end" textLength="45.4" lengthAdjust="spacingAndGlyphs" stroke="#dcdcdc" stroke-width="0.18">Horseshoe Segs</text>
<rect x="576.30" y="455.20" width="45.10" height="8.00" fill="#404040" rx="0.8"/>
<text x="578.3" y="461.91" font-family='"Liberation Sans", sans-serif' font-size="7" font-weight="normal" fill="#c4c4c4" text-anchor="start" textLength="3.4" lengthAdjust="spacingAndGlyphs">8</text>
<path d="M616.6,458.5 h2.6 l-1.3,-1.9z M616.6,460.09999999999997 h2.6 l-1.3,1.9z" fill="#d8d8d8"/>
<text x="573.9" y="474.31" font-family='"Liberation Sans", sans-serif' font-size="7" font-weight="normal" fill="#dcdcdc" text-anchor="end" textLength="43.6" lengthAdjust="spacingAndGlyphs" stroke="#dcdcdc" stroke-width="0.18">Horseshoe Adj.</text>
<rect x="576.30" y="467.80" width="45.10" height="8.00" fill="#404040" rx="0.8"/>
<text x="578.3" y="474.51" font-family='"Liberation Sans", sans-serif' font-size="7" font-weight="normal" fill="#c4c4c4" text-anchor="start" textLength="8.6" lengthAdjust="spacingAndGlyphs">0.0</text>
<path d="M616.6,471.1 h2.6 l-1.3,-1.9z M616.6,472.7 h2.6 l-1.3,1.9z" fill="#d8d8d8"/>
<path d="M570.9000000000001,507 H626 V554.6 H526.2 V507 H527.8000000000001" stroke="#5c5c5c" stroke-width="0.8" fill="none"/>
<text x="528.6" y="508.31" font-family='"Liberation Sans", sans-serif' font-size="7" font-weight="normal" fill="#dcdcdc" text-anchor="start" textLength="41.7" lengthAdjust="spacingAndGlyphs" stroke="#dcdcdc" stroke-width="0.18">Vu Arches Info</text>
<text x="529.7" y="519.71" font-family='"Liberation Sans", sans-serif' font-size="7" font-weight="normal" fill="#dcdcdc" text-anchor="start" textLength="54.6" lengthAdjust="spacingAndGlyphs" stroke="#dcdcdc" stroke-width="0.18">Author: Vu Nguyen</text>
<text x="529.7" y="530.31" font-family='"Liberation Sans", sans-serif' font-size="7" font-weight="normal" fill="#dcdcdc" text-anchor="start" textLength="56.6" lengthAdjust="spacingAndGlyphs" stroke="#dcdcdc" stroke-width="0.18">(c) Vu Nguyen 2016</text>
<text x="529.7" y="540.71" font-family='"Liberation Sans", sans-serif' font-size="7" font-weight="normal" fill="#dcdcdc" text-anchor="start" textLength="37.5" lengthAdjust="spacingAndGlyphs" stroke="#dcdcdc" stroke-width="0.18">Version: 1.00</text>
<text x="529.7" y="551.71" font-family='"Liberation Sans", sans-serif' font-size="7" font-weight="normal" fill="#dcdcdc" text-anchor="start" textLength="74.3" lengthAdjust="spacingAndGlyphs" stroke="#dcdcdc" stroke-width="0.18">Email: vusta@hotmail.com</text>
</svg></body></html>
